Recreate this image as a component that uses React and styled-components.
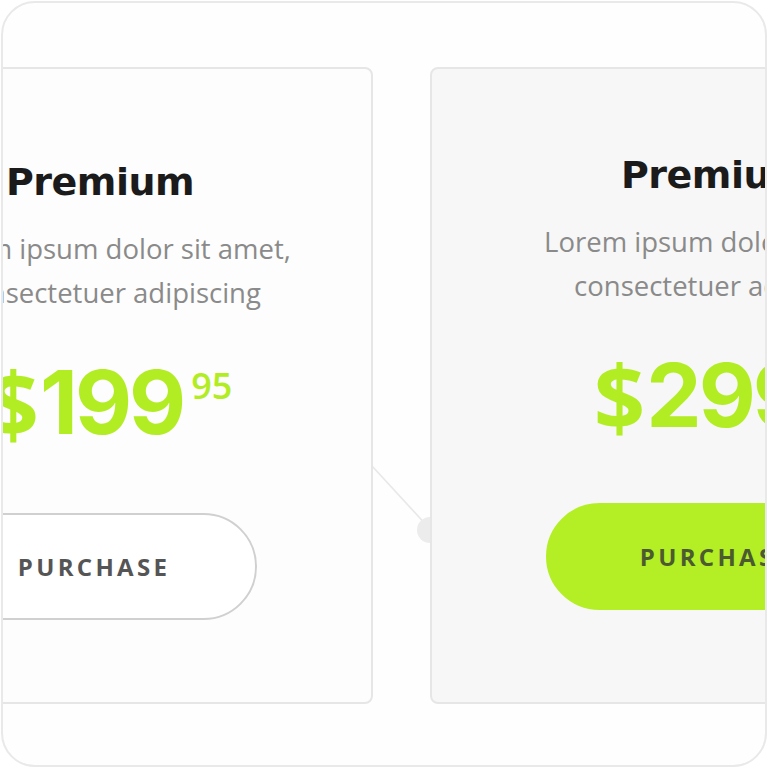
import React from "react";
import styled, { createGlobalStyle } from "styled-components";

const Global = createGlobalStyle`
  html, body { margin: 0; padding: 0; background: #ffffff; }
  #root { width: 768px; height: 768px; }
`;

const Frame = styled.div`
  position: relative;
  box-sizing: border-box;
  width: 766px;
  height: 766px;
  margin: 1px;
  border: 2px solid #e9e9e9;
  border-radius: 34px;
  overflow: hidden;
  background: #fefefe;
`;

const Connector = styled.svg`
  position: absolute;
  left: 0;
  top: 0;
  width: 762px;
  height: 762px;
  z-index: 0;
  pointer-events: none;
`;

const Row = styled.div`
  position: relative;
  z-index: 1;
  display: flex;
  gap: 57px;
  padding-top: 64px;
  margin-left: -188px;
`;

const Card = styled.div`
  flex-shrink: 0;
  box-sizing: border-box;
  width: 558px;
  height: 637px;
  border: 2px solid #e6e6e6;
  border-radius: 8px;
  background: ${(p) => (p.$featured ? "#f7f7f7" : "#fdfdfd")};
  display: flex;
  flex-direction: column;
  align-items: center;
  padding-left: 32px;
  padding-top: ${(p) => (p.$featured ? 83 : 90)}px;
`;

const Title = styled.h2`
  margin: 0 20px 0 0;
  font-family: "DejaVu Sans", sans-serif;
  font-weight: 700;
  font-size: 38px;
  line-height: 46px;
  color: #1b1b1b;
  letter-spacing: -0.5px;
`;

const Desc = styled.p`
  margin: 22px 0 0;
  font-family: "Open Sans", sans-serif;
  font-size: 27.5px;
  line-height: 44px;
  color: #8a8a8a;
  text-align: center;
  white-space: nowrap;
`;

const Price = styled.div`
  margin-top: 43px;
  display: flex;
  align-items: flex-start;
  color: #b2ed24;
  font-family: "Inter", sans-serif;
  font-weight: 700;
`;

const Currency = styled.span`
  font-family: "Open Sans", sans-serif;
  font-size: 90px;
  line-height: 88px;
  margin-right: 1px;
`;

const Amount = styled.span`
  font-size: 88px;
  line-height: 88px;
  letter-spacing: -3px;
`;

const Cents = styled.span`
  margin: 10px 0 0 8px;
  font-family: "Open Sans", sans-serif;
  font-weight: 600;
  font-size: 36px;
  line-height: 36px;
`;

const Button = styled.button`
  box-sizing: border-box;
  margin: ${(p) => (p.$featured ? 64 : 67)}px 0 0 -32px;
  width: 326px;
  height: 107px;
  border-radius: 60px;
  border: 2px solid ${(p) => (p.$featured ? "#b4ef25" : "#d0d0d0")};
  background: ${(p) => (p.$featured ? "#b4ef25" : "#ffffff")};
  color: ${(p) => (p.$featured ? "#4b5a30" : "#555555")};
  font-family: "Open Sans", sans-serif;
  font-weight: 700;
  font-size: 24px;
  letter-spacing: 3.3px;
  padding: 0 0 0 ${(p) => (p.$featured ? 14 : 0)}px;
  cursor: pointer;
`;

function Plan({ featured, amount, cents }) {
  return (
    <Card $featured={featured}>
      <Title>Premium</Title>
      <Desc>
        Lorem ipsum dolor sit amet,
        <br />
        consectetuer adipiscing
      </Desc>
      <Price>
        <Currency>$</Currency>
        <Amount>{amount}</Amount>
        <Cents>{cents}</Cents>
      </Price>
      <Button $featured={featured}>PURCHASE</Button>
    </Card>
  );
}

export default function App() {
  return (
    <>
      <Global />
      <Frame>
        <Connector viewBox="0 0 762 762">
          <line x1="300" y1="388" x2="427" y2="526" stroke="#e8e8e8" strokeWidth="1.6" />
          <circle cx="427" cy="527" r="13" fill="#ececec" />
        </Connector>
        <Row>
          <Plan amount="199" cents="95" />
          <Plan featured amount="299" cents="95" />
        </Row>
      </Frame>
    </>
  );
}
